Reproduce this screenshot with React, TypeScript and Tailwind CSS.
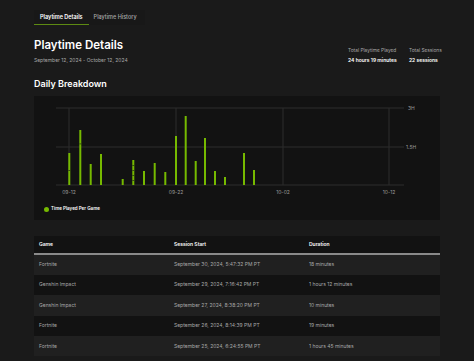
import { FC } from "react";

const GREEN = "#76b900";

// bars: center x, top y (page coords), plus optional divider y's for stacked sessions
const bars: { x: number; top: number; cuts?: number[] }[] = [
  { x: 69.3, top: 153, cuts: [170] },
  { x: 80.3, top: 130, cuts: [143.5] },
  { x: 90.7, top: 164 },
  { x: 101, top: 154 },
  { x: 122.7, top: 179 },
  { x: 133.3, top: 160, cuts: [165, 170, 175, 180] },
  { x: 144, top: 171 },
  { x: 154.7, top: 163 },
  { x: 165.3, top: 172 },
  { x: 176, top: 136 },
  { x: 185.7, top: 116 },
  { x: 195.7, top: 161 },
  { x: 205, top: 138 },
  { x: 215, top: 171 },
  { x: 225, top: 177 },
  { x: 244, top: 153 },
  { x: 254, top: 170 },
];

const OX = 34;
const OY = 96;
const BASE = 185 - OY;
const ticks = [
  { x: 69, label: "09-12" },
  { x: 176, label: "09-22" },
  { x: 283, label: "10-02" },
  { x: 389, label: "10-12" },
];

const sessions = [
  { game: "Fortnite", start: "September 30, 2024, 5:47:32 PM PT", duration: "18 minutes" },
  { game: "Genshin Impact", start: "September 29, 2024, 7:16:42 PM PT", duration: "1 hours 12 minutes" },
  { game: "Genshin Impact", start: "September 27, 2024, 8:38:20 PM PT", duration: "10 minutes" },
  { game: "Fortnite", start: "September 26, 2024, 8:14:39 PM PT", duration: "19 minutes" },
  { game: "Fortnite", start: "September 25, 2024, 6:24:55 PM PT", duration: "1 hours 45 minutes" },
];

const Chart: FC = () => (
  <svg width={405} height={104} className="block">
    {[12, 51, BASE].map((y) => (
      <line key={y} x1={22} x2={370} y1={y} y2={y} stroke="#2c2c2c" strokeWidth={1} />
    ))}
    {ticks.map((t) => (
      <line key={t.x} x1={t.x - OX} x2={t.x - OX} y1={12} y2={BASE} stroke="#2c2c2c" strokeWidth={1} />
    ))}
    <text x={374} y={14} fontSize={5} fill="#9a9a9a">3H</text>
    <text x={372} y={53} fontSize={5} fill="#9a9a9a">1.5H</text>
    {ticks.map((t) => (
      <text key={t.label} x={t.x - OX} y={98} fontSize={5} fill="#9a9a9a" textAnchor="middle">
        {t.label}
      </text>
    ))}
    {bars.map((b) => (
      <g key={b.x}>
        <rect x={b.x - OX - 1} y={b.top - OY} width={2} height={BASE - (b.top - OY)} fill={GREEN} />
        {b.cuts?.map((c) => (
          <rect key={c} x={b.x - OX - 1} y={c - OY} width={2} height={0.8} fill="#2a3a10" />
        ))}
      </g>
    ))}
  </svg>
);

export default function App() {
  return (
    <div
      className="w-[474px] h-[361px] overflow-hidden bg-[#1a1a1a] text-white"
      style={{ fontFamily: "Inter, 'Noto Sans', sans-serif" }}
    >
      <div className="px-[34px]">
        {/* tabs */}
        <div className="mt-[10px] flex w-[111px] bg-[#181818] text-[5.5px] font-semibold">
          <div className="h-[15px] flex items-center px-[6px] border-b-[1.5px] border-[#5d8a12] text-white">
            Playtime Details
          </div>
          <div className="h-[15px] flex items-center px-[5px] text-[#a8a8a8] font-medium">Playtime History</div>
        </div>

        {/* title + totals */}
        <div className="flex items-end justify-between">
          <div>
            <h1 className="mt-[13px] text-[11.5px] leading-[14px] font-semibold">Playtime Details</h1>
            <p className="mt-[5px] text-[5px] leading-[7px] text-[#a8a8a8]">
              September 12, 2024 - October 12, 2024
            </p>
          </div>
          <div className="flex gap-[10px] whitespace-nowrap">
            <div className="w-[51px]">
              <div className="text-[4.8px] leading-[7px] text-[#a8a8a8]">Total Playtime Played</div>
              <div className="mt-[3px] text-[5px] leading-[7px] font-semibold">24 hours 19 minutes</div>
            </div>
            <div className="w-[31px]">
              <div className="text-[4.8px] leading-[7px] text-[#a8a8a8]">Total Sessions</div>
              <div className="mt-[3px] text-[5px] leading-[7px] font-semibold">22 sessions</div>
            </div>
          </div>
        </div>

        <h2 className="mt-[14px] text-[9px] leading-[12px] font-semibold">Daily Breakdown</h2>

        {/* chart panel */}
        <div className="mt-[6px] h-[124px] bg-[#121212]">
          <Chart />
          <div className="ml-[10px] mt-[6px] flex items-center gap-[2px]">
            <span className="w-[5px] h-[5px] rounded-full bg-[#76b900]" />
            <span className="text-[4.5px] font-semibold text-white">Time Played Per Game</span>
          </div>
        </div>

        {/* table */}
        <div className="mt-[16px] text-[5px]">
          <div className="grid grid-cols-[135px_135px_1fr] h-[17px] items-center bg-[#121212] font-semibold px-[5px]">
            <div>Game</div>
            <div>Session Start</div>
            <div>Duration</div>
          </div>
          <div className="h-[1.5px] bg-[#8a8a8a]" />
          {sessions.map((s, i) => (
            <div
              key={i}
              className={
                "grid grid-cols-[135px_135px_1fr] h-[20.4px] items-center px-[5px] text-[#a8a8a8] " +
                (i % 2 === 0 ? "bg-[#202020]" : "bg-[#121212]")
              }
            >
              <div>{s.game}</div>
              <div>{s.start}</div>
              <div>{s.duration}</div>
            </div>
          ))}
        </div>
      </div>
    </div>
  );
}
